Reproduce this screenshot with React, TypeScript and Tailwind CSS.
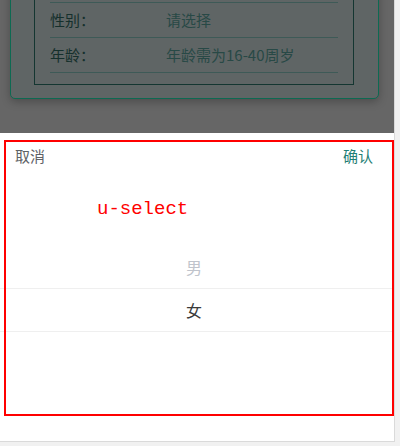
export default function App() {
  const font = { fontFamily: '"Noto Sans CJK SC", "Noto Sans", sans-serif' };

  return (
    <div className="w-[400px] h-[446px] bg-[#f1f1f1] overflow-hidden" style={font}>
      <div className="w-[395px] h-[442px] bg-white border-r border-b border-[#dadada] flex flex-col">
        {/* Form page behind the mask */}
        <div className="h-[133px] bg-[#666666] overflow-hidden flex flex-col justify-end pb-[34px]">
          <div className="ml-[10px] w-[369px] border border-[#0d6a52] rounded-[5px] bg-[#5f6565] pb-[13px] shadow-[0_3px_8px_rgba(0,0,0,0.25)]">
            <div className="ml-[23px] w-[320px] border border-[#143631] border-t-0 px-[15px] pb-[11px]">
              <div className="h-[35px] border-b border-[#3e5a57]" />
              <div className="h-[35px] border-b border-[#3e5a57] flex items-center text-[15px]">
                <span className="w-[116px] text-[#15302c]">性别：</span>
                <span className="text-[#284946]">请选择</span>
              </div>
              <div className="h-[35px] border-b border-[#3e5a57] flex items-center text-[15px]">
                <span className="w-[116px] text-[#15302c]">年龄：</span>
                <span className="text-[#284946]">年龄需为16-40周岁</span>
              </div>
            </div>
          </div>
        </div>

        {/* Select popup */}
        <div className="relative flex-1 flex flex-col">
          <div className="h-[46px] flex items-center justify-between pl-[15px] pr-[21px] text-[15px]">
            <span className="text-[#606266]">取消</span>
            <span className="text-[#1f7f76]">确认</span>
          </div>
          <div className="flex-1 flex flex-col pt-[66px] text-[16px]">
            <div className="h-[43px] flex items-center justify-center pr-[6px] text-[#c0c4cc]">男</div>
            <div className="h-[44px] border-y border-[#efefef] flex items-center justify-center pr-[6px] text-[#3a3a3a]">女</div>
          </div>

          {/* annotation overlay */}
          <div className="absolute left-[4px] top-[7px] w-[390px] h-[276px] border-2 border-[#ff0000] pointer-events-none">
            <span
              className="absolute left-[91px] top-[58px] text-[19px] leading-none text-[#ff0000]"
              style={{ fontFamily: '"Liberation Mono", monospace' }}
            >
              u-select
            </span>
          </div>
        </div>
      </div>
    </div>
  );
}
